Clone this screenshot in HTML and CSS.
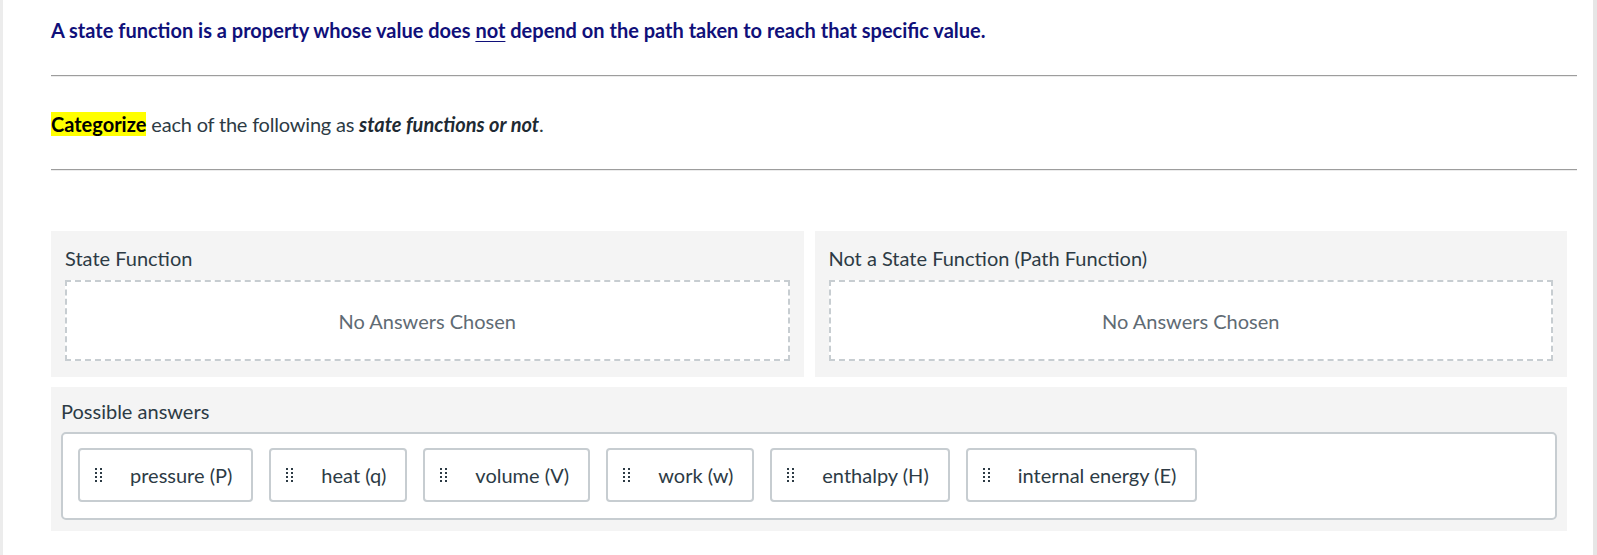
FILE: index.html
```html
<!DOCTYPE html>
<html lang="en">
<head>
<meta charset="utf-8">
<title>State functions</title>
<link rel="stylesheet" href="styles.css">
</head>
<body>
<div class="strip strip-left"></div>
<main class="main">
  <p class="lead">A state function is a property whose value does <u>not</u> depend on the path taken to reach that specific value.</p>
  <hr class="rule">
  <p class="instr"><span class="hl">Categorize</span><span class="plain"> each of the following as </span><b><i>state functions or not</i></b>.</p>
  <hr class="rule">
  <section class="quiz">
    <div class="cats">
      <div class="cat">
        <div class="cat-title">State Function</div>
        <div class="drop">No Answers Chosen</div>
      </div>
      <div class="cat">
        <div class="cat-title">Not a State Function (Path Function)</div>
        <div class="drop">No Answers Chosen</div>
      </div>
    </div>
    <div class="pool">
      <div class="pool-title">Possible answers</div>
      <div class="pool-box">
        <div class="chip"><span class="grip"><i></i><i></i><i></i><i></i><i></i><i></i><i></i><i></i></span><span class="chip-text">pressure (P)</span></div>
        <div class="chip"><span class="grip"><i></i><i></i><i></i><i></i><i></i><i></i><i></i><i></i></span><span class="chip-text">heat (q)</span></div>
        <div class="chip"><span class="grip"><i></i><i></i><i></i><i></i><i></i><i></i><i></i><i></i></span><span class="chip-text">volume (V)</span></div>
        <div class="chip"><span class="grip"><i></i><i></i><i></i><i></i><i></i><i></i><i></i><i></i></span><span class="chip-text">work (w)</span></div>
        <div class="chip"><span class="grip"><i></i><i></i><i></i><i></i><i></i><i></i><i></i><i></i></span><span class="chip-text">enthalpy (H)</span></div>
        <div class="chip"><span class="grip"><i></i><i></i><i></i><i></i><i></i><i></i><i></i><i></i></span><span class="chip-text">internal energy (E)</span></div>
      </div>
    </div>
  </section>
</main>
<div class="strip strip-right"></div>
</body>
</html>
```

FILE: styles.css
```css
html, body {
  margin: 0;
  padding: 0;
  background: #ffffff;
}
body {
  display: flex;
  min-height: 555px;
  font-family: Lato, "Open Sans", "Liberation Sans", sans-serif;
  color: #2d3b45;
}
.strip {
  flex: none;
  background: #ececec;
}
.strip-left { width: 3px; }
.strip-right { width: 4px; background: #e6e6e6; }
.main {
  flex: 1;
  padding: 0 16px 0 48px;
}
.lead {
  margin: 0;
  padding-top: 16px;
  font-size: 20px;
  line-height: 28px;
  font-weight: 700;
  color: #10107a;
}
.lead u {
  text-decoration-thickness: 1px;
  text-underline-offset: 3px;
}
.rule {
  margin: 0;
  height: 0;
  border: 0;
  border-top: 1px solid #9d9d9d;
  border-bottom: 1px solid #ececec;
}
.lead + .rule { margin-top: 31px; }
.instr {
  margin: 33px 0 0;
  font-size: 20px;
  line-height: 28px;
  color: #2d3b45;
}
.instr .plain { letter-spacing: -0.2px; }
.instr + .rule { margin-top: 31px; }
.hl {
  background: #ffff00;
  color: #000;
  font-weight: 700;
}
.instr b { color: #1e2a33; font-weight: 700; }
.quiz {
  margin: 60px 10px 0 0;
  display: flex;
  flex-direction: column;
  gap: 10px;
}
.cats {
  display: flex;
  gap: 11px;
}
.cat {
  flex: 1;
  background: #f4f4f4;
  padding: 14px 14px 16px;
}
.cat-title {
  font-size: 20px;
  line-height: 26px;
  margin-bottom: 9px;
}
.drop {
  height: 77px;
  border: 2px dashed #c7cdd1;
  background: #fff;
  display: flex;
  align-items: center;
  justify-content: center;
  font-size: 20px;
  color: #5f6b74;
}
.pool {
  background: #f4f4f4;
  padding: 11px 10px 11px;
}
.pool-title {
  font-size: 20px;
  line-height: 26px;
  margin-bottom: 8px;
}
.pool-box {
  background: #fff;
  border: 2px solid #c7cdd1;
  border-radius: 5px;
  padding: 14px 15px 16px;
  display: flex;
  gap: 16px;
}
.chip {
  height: 54px;
  box-sizing: border-box;
  border: 2px solid #c7cdd1;
  border-radius: 4px;
  padding: 0 19px 0 15px;
  display: flex;
  align-items: center;
  font-size: 20px;
  color: #2d3b45;
}
.grip {
  display: grid;
  grid-template-columns: 3px 3px;
  grid-auto-rows: 3px;
  column-gap: 2px;
  row-gap: 1px;
  width: 8px;
}
.grip i {
  display: block;
  width: 2px;
  height: 2px;
  background: #2d3b45;
}
.chip-text {
  margin-left: 27px;
}
```
